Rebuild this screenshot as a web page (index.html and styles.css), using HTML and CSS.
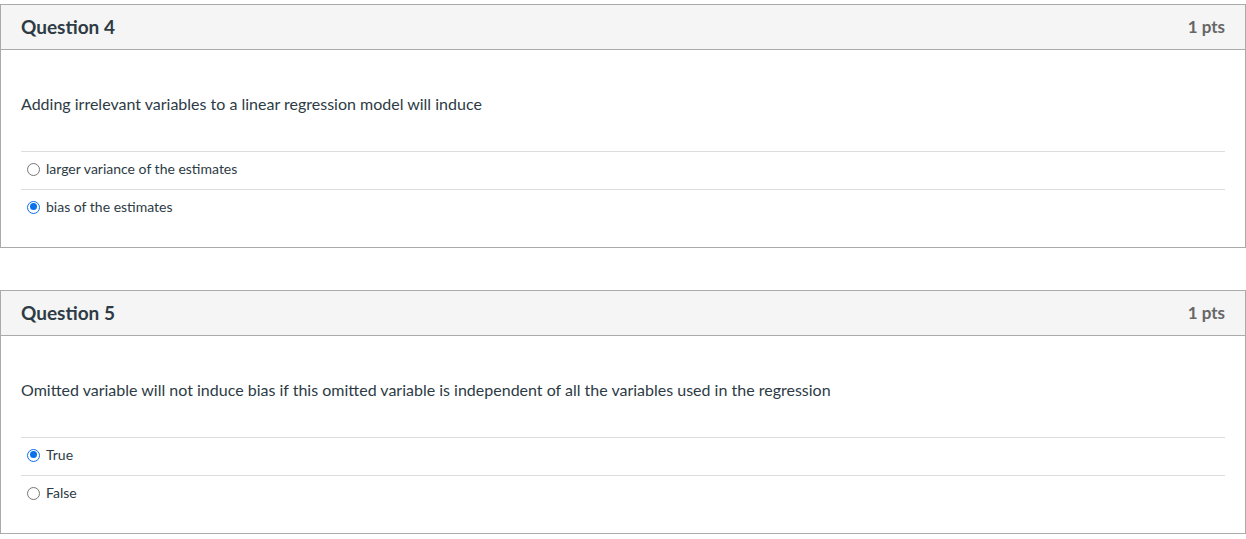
FILE: index.html
```html
<!DOCTYPE html>
<html>
<head>
<meta charset="utf-8">
<link rel="stylesheet" href="styles.css">
</head>
<body>
<div class="page">
  <div class="card">
    <div class="card-header">
      <span class="q-title">Question 4</span>
      <span class="q-pts">1 pts</span>
    </div>
    <div class="card-body">
      <div class="q-text">Adding irrelevant variables to a linear regression model will induce</div>
      <div class="answers">
        <div class="answer"><span class="radio"></span><span class="a-label">larger variance of the estimates</span></div>
        <div class="answer"><span class="radio checked"></span><span class="a-label">bias of the estimates</span></div>
      </div>
    </div>
  </div>
  <div class="card">
    <div class="card-header">
      <span class="q-title">Question 5</span>
      <span class="q-pts">1 pts</span>
    </div>
    <div class="card-body">
      <div class="q-text">Omitted variable will not induce bias if this omitted variable is independent of all the variables used in the regression</div>
      <div class="answers">
        <div class="answer"><span class="radio checked"></span><span class="a-label">True</span></div>
        <div class="answer"><span class="radio"></span><span class="a-label">False</span></div>
      </div>
    </div>
  </div>
</div>
</body>
</html>
```
FILE: styles.css
```css
html, body {
  margin: 0;
  padding: 0;
  background: #ffffff;
}
body {
  font-family: Lato, "Open Sans", "Liberation Sans", sans-serif;
  color: #2d3b45;
}
.page {
  padding-top: 4px;
  display: flex;
  flex-direction: column;
  gap: 42px;
  width: 1246px;
}
.card {
  border: 1px solid #aaaaaa;
  background: #ffffff;
}
.card-header {
  height: 45px;
  box-sizing: border-box;
  background: #f5f5f5;
  border-bottom: 1px solid #aaaaaa;
  display: flex;
  align-items: center;
  justify-content: space-between;
  padding: 0 20px 1px;
}
.q-title {
  font-size: 19px;
  font-weight: 700;
  color: #2d3b45;
}
.q-pts {
  font-size: 17px;
  font-weight: 700;
  color: #666666;
}
.card-body {
  padding: 0 20px 20px;
}
.q-text {
  margin-top: 44px;
  font-size: 16px;
  line-height: 20px;
}
.answers {
  margin-top: 37px;
}
.answer {
  border-top: 1px solid #dddddd;
  height: 38px;
  display: flex;
  align-items: center;
  box-sizing: border-box;
  font-size: 14px;
}
.answer .a-label {
  line-height: 16px;
  margin-top: -4px;
}
.radio {
  width: 13px;
  height: 13px;
  box-sizing: border-box;
  border: 1px solid #767676;
  border-radius: 50%;
  margin: -3px 6px 0 6px;
  position: relative;
  background: #fff;
}
.radio.checked {
  border: 1.5px solid #0b6fe8;
}
.radio.checked::after {
  content: "";
  position: absolute;
  left: 1.5px;
  top: 1.5px;
  width: 7px;
  height: 7px;
  border-radius: 50%;
  background: #0b6fe8;
}
```
